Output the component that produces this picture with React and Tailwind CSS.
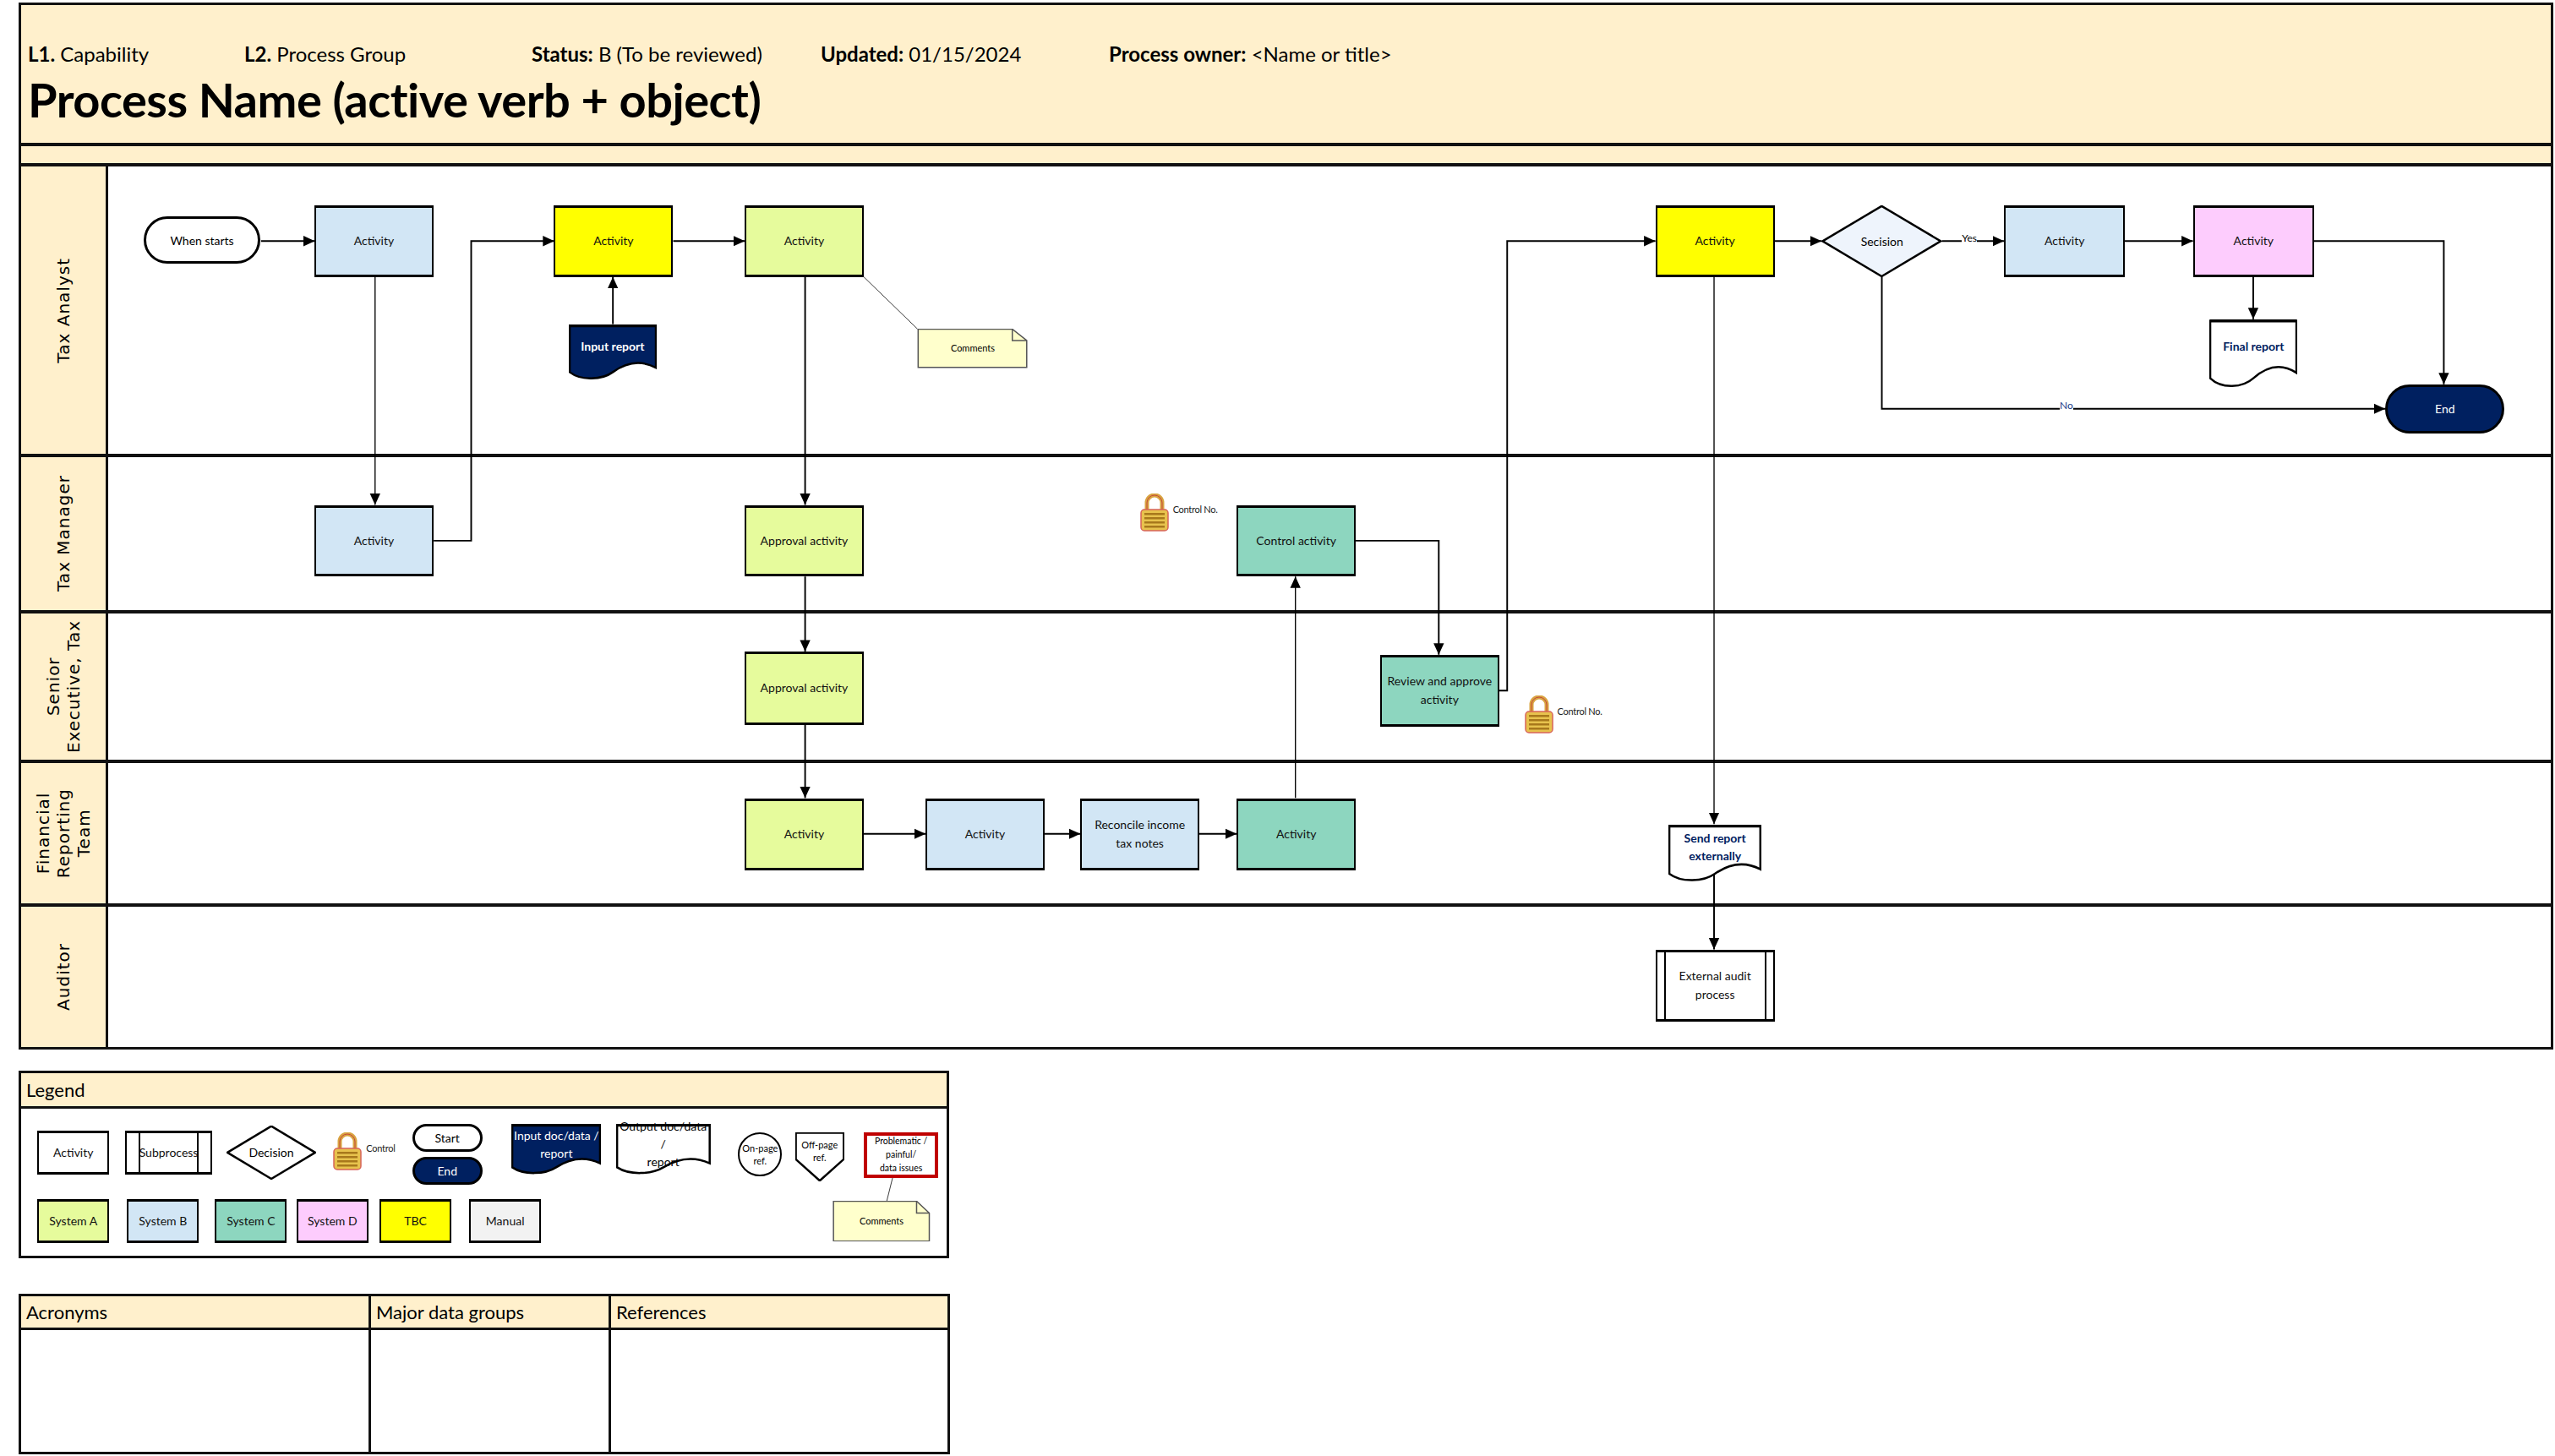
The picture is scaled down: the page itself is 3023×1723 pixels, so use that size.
import React from "react";

const K = 3023 / 1568;
const pos = (x1, y1, x2, y2) => ({ left: x1 * K, top: y1 * K, width: (x2 - x1) * K, height: (y2 - y1) * K });

const C = { blue: "#d2e6f5", yellow: "#ffff00", green: "#e6fb9c", pink: "#fdccfd", teal: "#8dd6bf", navy: "#002060", note: "#ffffcc", manual: "#f2f2f2", dia: "#eef4fc" };

function Box({ b, fill, children, cls = "" }) {
  return (
    <div className={"absolute flex items-center justify-center text-center border-x-2 border-y-[3px] border-black leading-[1.6] text-[14px] text-[#111] " + cls} style={{ ...pos(...b), background: fill }}>
      {children}
    </div>
  );
}
function Pill({ b, fill = "#fff", children, cls = "" }) {
  return (
    <div className={"absolute flex items-center justify-center rounded-full border-[3px] border-black text-[14px] " + cls} style={{ ...pos(...b), background: fill }}>
      {children}
    </div>
  );
}
function Doc({ b, fill = "#fff", children, cls = "" }) {
  return (
    <div className="absolute" style={pos(...b)}>
      <svg className="absolute inset-0 w-full h-full" viewBox="0 0 100 100" preserveAspectRatio="none">
        <path d="M1,2 H99 V78 C80,62 64,70 50,86 C38,100 14,102 1,86 Z" fill={fill} stroke="#000" strokeWidth="2.5" vectorEffect="non-scaling-stroke" />
        <line x1="1" y1="2" x2="99" y2="2" stroke="#000" strokeWidth="4" vectorEffect="non-scaling-stroke" />
      </svg>
      <div className={"absolute left-0 right-0 top-[8%] h-[62%] flex items-center justify-center text-center text-[14px] leading-[1.5] " + cls}>{children}</div>
    </div>
  );
}
function Diamond({ b, fill = C.dia, children, cls = "" }) {
  return (
    <div className="absolute" style={pos(...b)}>
      <svg className="absolute inset-0 w-full h-full" viewBox="0 0 100 100" preserveAspectRatio="none">
        <polygon points="50,1 99,50 50,99 1,50" fill={fill} stroke="#000" strokeWidth="2.5" vectorEffect="non-scaling-stroke" />
      </svg>
      <div className={"absolute inset-0 flex items-center justify-center text-[14px] " + cls}>{children}</div>
    </div>
  );
}
function Note({ b, children, cls = "text-[11px]" }) {
  return (
    <div className="absolute" style={pos(...b)}>
      <svg className="absolute inset-0 w-full h-full" viewBox="0 0 100 100" preserveAspectRatio="none">
        <path d="M1,1 H86 L99,30 V99 H1 Z" fill={C.note} stroke="#555" strokeWidth="1.5" vectorEffect="non-scaling-stroke" />
        <path d="M86,1 V30 H99" fill="none" stroke="#555" strokeWidth="1.5" vectorEffect="non-scaling-stroke" />
      </svg>
      <div className={"absolute inset-0 flex items-center justify-center " + cls}>{children}</div>
    </div>
  );
}
function Lock({ x, y, label }) {
  return (
    <div className="absolute flex items-center" style={{ left: x * K, top: y * K }}>
      <svg width="36" height="46" viewBox="0 0 36 46">
        <path d="M9,20 V11 a9,9 0 0 1 18,0 V20" fill="none" stroke="#d9a441" strokeWidth="5" />
        <path d="M9,20 V11 a9,9 0 0 1 18,0 V20" fill="none" stroke="#c4483b" strokeWidth="1" />
        <rect x="2" y="19" width="32" height="25" rx="4" fill="#e7c24d" stroke="#d8645a" strokeWidth="1.5" />
        {[23, 28, 33, 38].map((yy) => <rect key={yy} x="6" y={yy} width="24" height="2.5" fill="#a8781c" />)}
      </svg>
      {label && <span className="ml-[4px] mb-[8px] text-[11px] text-[#222] tracking-tight">{label}</span>}
    </div>
  );
}

const lanes = [
  { h: 340, label: ["Tax Analyst"] },
  { h: 185, label: ["Tax Manager"] },
  { h: 177, label: ["Senior", "Executive, Tax"] },
  { h: 170, label: ["Financial", "Reporting", "Team"] },
  { h: 170, label: ["Auditor"] },
];

const arrows = [
  "M160,148 H193", "M230,170 V310", "M266,332 H289 V148 H340", "M376,199 V170", "M413,148 H457",
  "M494,170 V310", "M494,354 V400", "M494,445 V490", "M530,512 H568", "M641,512 H663", "M736,512 H759",
  "M795,490 V354", "M832,332 H883 V402", "M920,424 H925 V148 H1016", "M1089,148 H1118", "M1192,148 H1230",
  "M1304,148 H1346", "M1383,170 V196", "M1420,148 H1500 V236", "M1155,170 V251 H1464", "M1052,170 V506", "M1052,533 V583",
];

export default function App() {
  const font = { fontFamily: "Lato, 'Open Sans', sans-serif" };
  return (
    <div className="relative w-[3023px] h-[1723px] bg-white overflow-hidden text-black" style={font}>
      {/* main frame */}
      <div className="ml-[22px] mt-[3px] w-[2999px] border-[3px] border-[#111] flex flex-col">
        <div className="h-[163px] bg-[#fff0cc] flex flex-col pl-[8px] pt-[46px]">
          <div className="flex text-[24px] leading-none">
            <span className="w-[256px]"><b>L1.</b> Capability</span>
            <span className="w-[340px]"><b>L2.</b> Process Group</span>
            <span className="w-[342px]"><b>Status:</b> B (To be reviewed)</span>
            <span className="w-[341px]"><b>Updated:</b> 01/15/2024</span>
            <span><b>Process owner:</b> &lt;Name or title&gt;</span>
          </div>
          <div className="text-[56px] font-bold leading-none mt-[14px] tracking-[-0.5px]">Process Name (active verb + object)</div>
        </div>
        <div className="h-[28px] bg-[#fff0cc] border-y-[4px] border-[#111]"></div>
        {lanes.map((l, i) => (
          <div key={i} className={"flex " + (i > 0 ? "border-t-[4px] border-[#111]" : "")} style={{ height: l.h - (i > 0 ? 0 : 0) }}>
            <div className="w-[103px] shrink-0 bg-[#fff0cc] border-r-[3px] border-[#111] flex items-center justify-center">
              <div className="[writing-mode:vertical-rl] rotate-180 text-center text-[20px] leading-[1.2] tracking-[1px]" style={{ fontFamily: "'DejaVu Sans', sans-serif" }}>
                {l.label.map((t) => <div key={t}>{t}</div>)}
              </div>
            </div>
            <div className="flex-1 bg-white"></div>
          </div>
        ))}
      </div>

      {/* legend */}
      <div className="ml-[22px] mt-[25px] w-[1101px] h-[222px] border-[3px] border-[#111] flex flex-col">
        <div className="h-[42px] bg-[#fff0cc] border-b-[3px] border-[#111] flex items-center pl-[6px] text-[22px]">Legend</div>
        <div className="flex-1"></div>
      </div>

      {/* tables */}
      <div className="ml-[22px] mt-[42px] w-[1102px] h-[190px] border-[3px] border-[#111] grid grid-cols-[414px_284px_1fr] grid-rows-[40px_1fr]">
        {["Acronyms", "Major data groups", "References"].map((t, i) => (
          <div key={t} className={"bg-[#fff0cc] border-b-[3px] border-[#111] flex items-center pl-[6px] text-[22px] " + (i < 2 ? "border-r-[3px]" : "")}>{t}</div>
        ))}
        <div className="border-r-[3px] border-[#111]"></div>
        <div className="border-r-[3px] border-[#111]"></div>
        <div></div>
      </div>

      {/* connectors */}
      <svg className="absolute inset-0 pointer-events-none" width="3023" height="1723" viewBox="0 0 1568 894">
        <defs>
          <marker id="ah" markerUnits="userSpaceOnUse" markerWidth="8" markerHeight="8" refX="7" refY="4" orient="auto">
            <path d="M0,0.8 L7,4 L0,7.2 Z" fill="#000" />
          </marker>
        </defs>
        {arrows.map((d) => (
          <path key={d} d={d} fill="none" stroke="#000" strokeWidth={d.startsWith("M1052,170") || d.startsWith("M230") || d.startsWith("M795") ? 0.7 : 1} markerEnd="url(#ah)" />
        ))}
        <line x1="530" y1="170" x2="563" y2="202" stroke="#333" strokeWidth="0.5" />
        <line x1="548" y1="722" x2="544" y2="738" stroke="#333" strokeWidth="0.5" />
      </svg>
      <span className="absolute text-[12px] bg-white leading-none" style={{ left: 1204 * K, top: 143 * K }}>Yes</span>
      <span className="absolute text-[12px] bg-white leading-none text-[#1a3b8a]" style={{ left: 1264 * K, top: 246 * K }}>No</span>

      {/* nodes */}
      <Pill b={[88, 133, 160, 162]}>When starts</Pill>
      <Box b={[193, 126, 266, 170]} fill={C.blue}>Activity</Box>
      <Box b={[340, 126, 413, 170]} fill={C.yellow}>Activity</Box>
      <Doc b={[349, 199, 403, 233]} fill={C.navy} cls="text-white font-bold">Input report</Doc>
      <Box b={[457, 126, 530, 170]} fill={C.green}>Activity</Box>
      <Note b={[563, 202, 631, 226]}>Comments</Note>
      <Box b={[1016, 126, 1089, 170]} fill={C.yellow}>Activity</Box>
      <Diamond b={[1118, 126, 1192, 170]}>Secision</Diamond>
      <Box b={[1230, 126, 1304, 170]} fill={C.blue}>Activity</Box>
      <Box b={[1346, 126, 1420, 170]} fill={C.pink}>Activity</Box>
      <Doc b={[1356, 196, 1410, 238]} cls="text-[#002060] font-bold">Final report</Doc>
      <Pill b={[1464, 236, 1537, 266]} fill={C.navy} cls="text-white">End</Pill>

      <Box b={[193, 310, 266, 354]} fill={C.blue}>Activity</Box>
      <Box b={[457, 310, 530, 354]} fill={C.green}>Approval activity</Box>
      <Lock x={699} y={303} label="Control No." />
      <Box b={[759, 310, 832, 354]} fill={C.teal}>Control activity</Box>

      <Box b={[457, 400, 530, 445]} fill={C.green}>Approval activity</Box>
      <Box b={[847, 402, 920, 446]} fill={C.teal}>Review and approve<br />activity</Box>
      <Lock x={935} y={427} label="Control No." />

      <Box b={[457, 490, 530, 534]} fill={C.green}>Activity</Box>
      <Box b={[568, 490, 641, 534]} fill={C.blue}>Activity</Box>
      <Box b={[663, 490, 736, 534]} fill={C.blue}>Reconcile income<br />tax notes</Box>
      <Box b={[759, 490, 832, 534]} fill={C.teal}>Activity</Box>
      <Doc b={[1024, 506, 1081, 541]} cls="text-[#002060] font-bold">Send report<br />externally</Doc>

      <Box b={[1016, 583, 1089, 627]} fill="#fff">
        <div className="absolute inset-y-0 left-[8px] border-l-2 border-black"></div>
        <div className="absolute inset-y-0 right-[8px] border-l-2 border-black"></div>
        External audit<br />process
      </Box>

      {/* legend items */}
      <Box b={[23, 694, 67, 721]} fill="#fff" cls="text-[11px]">Activity</Box>
      <Box b={[77, 694, 130, 721]} fill="#fff" cls="text-[11px]">
        <div className="absolute inset-y-0 left-[14px] border-l-2 border-black"></div>
        <div className="absolute inset-y-0 right-[14px] border-l-2 border-black"></div>
        Subprocess
      </Box>
      <Diamond b={[139, 691, 194, 724]} fill="#fff" cls="text-[11px]">Decision</Diamond>
      <Lock x={204} y={695} label="Control" />
      <Pill b={[253, 690, 296, 707]} cls="text-[11px]">Start</Pill>
      <Pill b={[253, 710, 296, 727]} fill={C.navy} cls="text-[11px] text-white">End</Pill>
      <Doc b={[314, 690, 369, 721]} fill={C.navy} cls="text-[11px] text-white leading-[1.4]">Input doc/data /<br />report</Doc>
      <Doc b={[378, 690, 436, 721]} cls="text-[11px] leading-[1.4]">Output doc/data /<br />report</Doc>
      <div className="absolute rounded-full border-2 border-black bg-white flex items-center justify-center text-center text-[11px] leading-[1.4]" style={pos(453, 695, 480, 722)}>On-page<br />ref.</div>
      <div className="absolute" style={pos(488, 695, 518, 725)}>
        <svg className="absolute inset-0 w-full h-full" viewBox="0 0 100 100" preserveAspectRatio="none">
          <path d="M1,1 H99 V55 L50,99 L1,55 Z" fill="#fff" stroke="#000" strokeWidth="2.5" vectorEffect="non-scaling-stroke" />
        </svg>
        <div className="absolute inset-x-0 top-[12%] text-center text-[11px] leading-[1.4]">Off-page<br />ref.</div>
      </div>
      <div className="absolute border-[4px] border-[#c00000] bg-white flex items-center justify-center text-center text-[10.5px] leading-[1.5]" style={pos(530, 695, 576, 723)}>Problematic /<br />painful/<br />data issues</div>
      <Note b={[511, 737, 571, 762]} cls="text-[11px]">Comments</Note>
      {[["System A", C.green, 23], ["System B", C.blue, 78], ["System C", C.teal, 132], ["System D", C.pink, 182], ["TBC", C.yellow, 233], ["Manual", C.manual, 288]].map(([t, f, x]) => (
        <Box key={t} b={[x, 736, x + 44, 763]} fill={f} cls={t === "Manual" ? "text-[13px]" : "text-[12px]"}>{t}</Box>
      ))}
    </div>
  );
}
